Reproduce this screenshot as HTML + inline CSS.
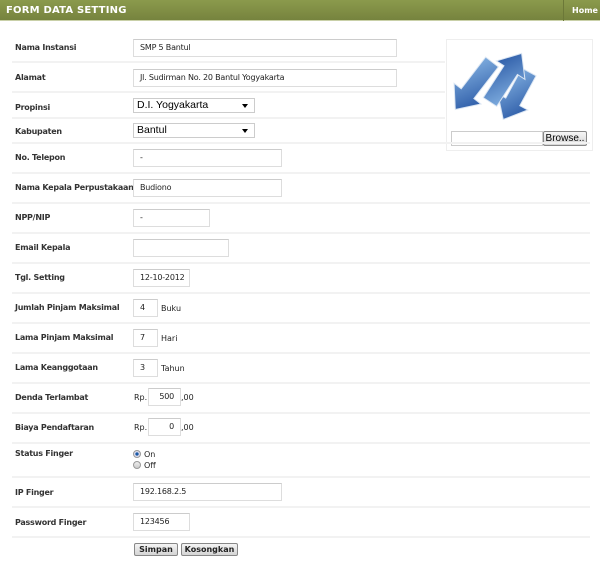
<!DOCTYPE html>
<html><head><meta charset="utf-8"><style>
*{margin:0;padding:0;box-sizing:border-box}
body{width:600px;height:562px;background:#fff;position:relative;overflow:hidden;font-family:"DejaVu Sans",Verdana,sans-serif}
.hd{position:absolute;left:0;top:0;width:600px;height:21px;background:linear-gradient(#8b9a4c,#76833e);border-bottom:1px solid #c9d0a8}
.hd .t{position:absolute;left:6px;top:5px;color:#fff;font-weight:bold;font-size:10px;letter-spacing:0.2px}
.hd .dv{position:absolute;left:563px;top:0;width:1px;height:21px;background:#6c7838}
.hd .h{position:absolute;left:572px;top:6px;color:#fff;font-weight:bold;font-size:8px}
.l{position:absolute;left:15px;font-size:8px;font-weight:bold;color:#333;letter-spacing:-0.25px;margin-top:1px}
.sep{position:absolute;left:12px;width:578px;height:2px;background:#f2f2f2}
.in{position:absolute;height:18px;border:1px solid #ddd;border-top-color:#ccc;background:#fff;font-size:8px;color:#222;padding:0 0 0 6px;line-height:16px;font-family:"DejaVu Sans",sans-serif;letter-spacing:-0.2px}
.sel{position:absolute;left:133px;width:122px;height:15px;border:1px solid #ccc;background:#fff;font-family:"Liberation Sans",Arial,sans-serif;font-size:10.5px;padding:0 0 0 3px;line-height:13px;color:#000}
.sel:after{content:"";position:absolute;right:6px;top:5px;border:3px solid transparent;border-top:4px solid #000}
.tx{position:absolute;font-size:8px;color:#222}
.btn{position:absolute;top:543px;height:13px;border:1px solid #888;border-radius:2px;background:linear-gradient(#f4f4f4,#d4d4d4);font-size:8px;font-weight:bold;color:#222;text-align:center;line-height:11px}
.rad{position:absolute;left:133px;width:8px;height:8px;border-radius:50%;border:1px solid #999;background:linear-gradient(#eee,#ccc)}
</style></head><body>
<div class="hd"><div class="t">FORM DATA SETTING</div><div class="dv"></div><div class="h">Home</div></div>

<div style="position:absolute;left:446px;top:39px;width:147px;height:112px;border:1px solid #eee;background:#fff"></div>
<svg style="position:absolute;left:0;top:0" width="600" height="160">
<defs><linearGradient id="g" x1="0" y1="0" x2="1" y2="1"><stop offset="0" stop-color="#8ab8e6"/><stop offset="1" stop-color="#1f4e9e"/></linearGradient></defs>
<g stroke="#dbe6f3" stroke-width="1" fill="url(#g)">
<polygon transform="translate(492,62) rotate(37.7)" points="-8,0 8,0 8,40 17,40 0,60 -17,40 -8,40"/>
<polygon transform="translate(529,72) rotate(28.5)" points="-8,0 8,0 8,34 17,34 0,54 -17,34 -8,34"/>
<polygon transform="translate(490,102) rotate(213)" points="-8,0 8,0 8,38 17,38 0,58 -17,38 -8,38"/>
</g>
</svg>
<div style="position:absolute;left:451px;top:131px;width:92px;height:15px;border:1px solid #ccc;background:#fff"></div>
<div style="position:absolute;left:543px;top:131px;width:44px;height:15px;border:1px solid #888;border-radius:2px;background:linear-gradient(#f6f6f6,#d6d6d6);font-family:'Liberation Sans',Arial,sans-serif;font-size:10px;text-align:center;line-height:13px">Browse..</div>

<div class="sep" style="top:61px;width:433px"></div>
<div class="sep" style="top:91px;width:433px"></div>
<div class="sep" style="top:117px;width:433px"></div>
<div class="sep" style="top:142px"></div>
<div class="sep" style="top:172px"></div>
<div class="sep" style="top:202px"></div>
<div class="sep" style="top:232px"></div>
<div class="sep" style="top:262px"></div>
<div class="sep" style="top:292px"></div>
<div class="sep" style="top:322px"></div>
<div class="sep" style="top:352px"></div>
<div class="sep" style="top:382px"></div>
<div class="sep" style="top:412px"></div>
<div class="sep" style="top:442px"></div>
<div class="sep" style="top:476px"></div>
<div class="sep" style="top:506px"></div>
<div class="sep" style="top:536px"></div>

<div class="l" style="top:42px">Nama Instansi</div>
<div class="l" style="top:72px">Alamat</div>
<div class="l" style="top:102px">Propinsi</div>
<div class="l" style="top:126px">Kabupaten</div>
<div class="l" style="top:152px">No. Telepon</div>
<div class="l" style="top:182px">Nama Kepala Perpustakaan</div>
<div class="l" style="top:212px">NPP/NIP</div>
<div class="l" style="top:242px">Email Kepala</div>
<div class="l" style="top:272px">Tgl. Setting</div>
<div class="l" style="top:302px">Jumlah Pinjam Maksimal</div>
<div class="l" style="top:332px">Lama Pinjam Maksimal</div>
<div class="l" style="top:362px">Lama Keanggotaan</div>
<div class="l" style="top:392px">Denda Terlambat</div>
<div class="l" style="top:422px">Biaya Pendaftaran</div>
<div class="l" style="top:448px">Status Finger</div>
<div class="l" style="top:487px">IP Finger</div>
<div class="l" style="top:517px">Password Finger</div>

<div class="in" style="left:133px;top:39px;width:264px">SMP 5 Bantul</div>
<div class="in" style="left:133px;top:69px;width:264px">Jl. Sudirman No. 20 Bantul Yogyakarta</div>
<div class="sel" style="top:98px">D.I. Yogyakarta</div>
<div class="sel" style="top:123px">Bantul</div>
<div class="in" style="left:133px;top:149px;width:149px">-</div>
<div class="in" style="left:133px;top:179px;width:149px">Budiono</div>
<div class="in" style="left:133px;top:209px;width:77px">-</div>
<div class="in" style="left:133px;top:239px;width:96px"></div>
<div class="in" style="left:133px;top:269px;width:57px">12-10-2012</div>
<div class="in" style="left:133px;top:299px;width:25px">4</div><div class="tx" style="left:161px;top:304px">Buku</div>
<div class="in" style="left:133px;top:329px;width:25px">7</div><div class="tx" style="left:161px;top:334px">Hari</div>
<div class="in" style="left:133px;top:359px;width:25px">3</div><div class="tx" style="left:161px;top:364px">Tahun</div>
<div class="tx" style="left:134px;top:393px">Rp.</div>
<div class="in" style="left:148px;top:388px;width:33px;text-align:right;padding-right:6px">500</div><div class="tx" style="left:181px;top:393px">,00</div>
<div class="tx" style="left:134px;top:423px">Rp.</div>
<div class="in" style="left:148px;top:418px;width:33px;text-align:right;padding-right:6px">0</div><div class="tx" style="left:181px;top:423px">,00</div>
<div class="rad" style="top:450px;background:radial-gradient(#1b5aa6 35%,#dde 45%)"></div><div class="tx" style="left:144px;top:450px">On</div>
<div class="rad" style="top:461px"></div><div class="tx" style="left:144px;top:461px">Off</div>
<div class="in" style="left:133px;top:483px;width:149px">192.168.2.5</div>
<div class="in" style="left:133px;top:513px;width:57px">123456</div>
<div class="btn" style="left:134px;width:44px">Simpan</div>
<div class="btn" style="left:181px;width:57px">Kosongkan</div>
</body></html>
